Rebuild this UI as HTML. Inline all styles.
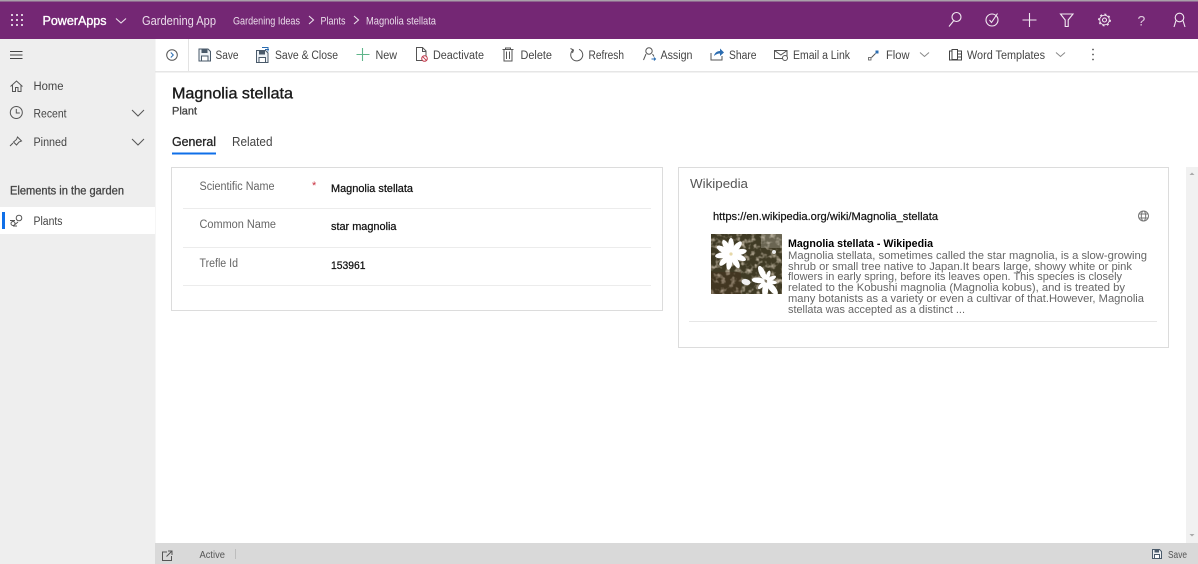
<!DOCTYPE html>
<html lang="en"><head><meta charset="utf-8"><title>Magnolia stellata</title>
<style>
html,body{margin:0;padding:0;background:#fff;width:1198px;height:564px;overflow:hidden}
svg{display:block}
#r{filter:blur(.3px)}
text{font-family:"Liberation Sans",sans-serif;white-space:pre}
.ic{fill:none;stroke:#555;stroke-width:1}
.w{fill:none;stroke:#fff;stroke-width:1.1}
.t{font-size:11.5px;fill:#444}
.n{font-size:11.5px;fill:#555}
.v{font-size:11px;fill:#111;stroke:#111;stroke-width:.25}
.d{font-size:11.5px;fill:#666}
.sb{stroke-width:.3}
</style></head><body>
<svg id="r" width="1198" height="564" viewBox="0 0 1198 564" xmlns="http://www.w3.org/2000/svg">
<defs>
<filter id="tx" x="0" y="0" width="100%" height="100%"><feTurbulence type="fractalNoise" baseFrequency=".2" numOctaves="2" seed="9"/><feColorMatrix values="0 0 0 0 .66  0 0 0 0 .58  0 0 0 0 .46  2.600 0 0 0 -1.250"/></filter>
<g id="sv"><path d="M.5 .5h9l2.500 2.500v9.500H.5z" fill="#eef2f6" stroke="#4a5a6a"/><rect x="3" y="1" width="6" height="3.500" fill="#4a5a6a"/><rect x="3" y="7.500" width="6.500" height="5" fill="#fff" stroke="#4a5a6a"/></g>
<g id="sv2"><path d="M.5 .5h7l2 2v7h-9z" fill="#eef0f2" stroke="#4a5a6a"/><rect x="2.500" y="1" width="4.500" height="2.500" fill="#4a5a6a"/><rect x="2.500" y="5.500" width="5" height="4" fill="#fff" stroke="#4a5a6a"/></g>
<ellipse id="p1" cx="0" cy="-9" rx="2.900" ry="7" fill="#fff"/>
<ellipse id="p2" cx="0" cy="-6" rx="2" ry="5" fill="#fff"/>
</defs>
<rect width="1198" height="564" fill="#fff"/>
<!-- header -->
<rect width="1198" height="39" fill="#742774"/>
<rect width="1198" height="1.500" fill="#a9a0a9"/>
<g fill="#fff"><circle cx="12" cy="15" r="1"/><circle cx="17" cy="15" r="1"/><circle cx="22" cy="15" r="1"/><circle cx="12" cy="20" r="1"/><circle cx="17" cy="20" r="1"/><circle cx="22" cy="20" r="1"/><circle cx="12" cy="25" r="1"/><circle cx="17" cy="25" r="1"/><circle cx="22" cy="25" r="1"/></g>
<text x="42.500" y="25" font-size="13" fill="#fff" stroke="#fff" stroke-width=".35" textLength="64" lengthAdjust="spacingAndGlyphs">PowerApps</text>
<path class="w" d="M116 18.500l5 4.500 5-4.500" opacity=".85"/>
<text x="142" y="25" font-size="13" fill="#eadcea" textLength="74" lengthAdjust="spacingAndGlyphs">Gardening App</text>
<text x="233" y="24.500" font-size="11" fill="#eadcea" textLength="67" lengthAdjust="spacingAndGlyphs">Gardening Ideas</text>
<path class="w" d="M309 16l4.500 4-4.500 4" opacity=".85"/>
<text x="320.500" y="24.500" font-size="11" fill="#eadcea" textLength="25" lengthAdjust="spacingAndGlyphs">Plants</text>
<path class="w" d="M354 16l4.500 4-4.500 4" opacity=".85"/>
<text x="366" y="24.500" font-size="11" fill="#eadcea" textLength="70" lengthAdjust="spacingAndGlyphs">Magnolia stellata</text>
<!-- header icons -->
<g opacity=".9">
<circle class="w" cx="956.500" cy="17" r="4.500"/><path class="w" d="M953.500 21l-4.500 5.500"/>
<circle class="w" cx="992" cy="20" r="6"/><path class="w" d="M989.500 20l2 2.500 6-9"/>
<path class="w" d="M1029.500 13v14M1022.500 20h14"/>
<path class="w" d="M1060.500 14h12.500l-4.800 6v6.500h-3v-6.500z"/>
<circle class="w" stroke-width=".8" cx="1104.500" cy="20" r="2"/><circle cx="1104.500" cy="20" r="4.800" fill="none" stroke="#fff" stroke-width=".9"/><circle cx="1104.500" cy="20" r="5.800" fill="none" stroke="#fff" stroke-width="1.200" stroke-dasharray="2 2.500"/>
<text x="1137.500" y="25.500" font-size="14" fill="#eadcea">?</text>
<circle class="w" cx="1179.500" cy="17.500" r="4.300"/><path class="w" d="M1174 27l2-6.500M1185 27l-2-6.500"/>
</g>
<!-- sidebar -->
<rect x="0" y="39" width="155.500" height="525" fill="#eeeeee"/>
<path d="M10 51.500h12.500M10 55h12.500M10 58.500h12.500" stroke="#444" stroke-width="1" fill="none"/>
<path class="ic" d="M10.500 86.500l6-5.500 6 5.500M12.500 85v6.500h3v-4h2.500v4h3V85"/>
<text x="33.500" y="90" class="t" textLength="30" lengthAdjust="spacingAndGlyphs">Home</text>
<circle class="ic" cx="16.300" cy="112.500" r="6"/><path class="ic" d="M16.300 109v4h3.500"/>
<text x="33.500" y="117.500" class="t" textLength="33" lengthAdjust="spacingAndGlyphs">Recent</text>
<path d="M132 110l6 6 6-6" fill="none" stroke="#555"/>
<path class="ic" d="M17.500 137l4 4-2.500 1-2.500 3-3-3 3-2.500zM13 143l-3 3"/>
<text x="33.500" y="146" class="t" textLength="33.500" lengthAdjust="spacingAndGlyphs">Pinned</text>
<path d="M132 139l6 6 6-6" fill="none" stroke="#555"/>
<text x="10" y="194.500" font-size="11.500" fill="#444" stroke="#444" class="sb" textLength="114" lengthAdjust="spacingAndGlyphs">Elements in the garden</text>
<rect x="0" y="207" width="155" height="27" fill="#fff"/>
<rect x="2" y="212" width="3" height="17" fill="#0f6fe8"/>
<circle class="ic" cx="19" cy="218" r="2.800"/><circle class="ic" cx="13" cy="223.500" r="2"/><path class="ic" d="M10 220.500h5M15 224.500l3-2.500M17 226h-4"/>
<text x="33.500" y="225" class="t" textLength="29" lengthAdjust="spacingAndGlyphs">Plants</text>
<!-- toolbar -->
<rect x="155" y="71" width="1043" height="1.500" fill="#e6e6e6"/>
<rect x="188" y="39" width="1" height="32" fill="#e3e3e3"/>
<circle cx="172" cy="55" r="5.300" fill="none" stroke="#555"/><path d="M170.800 52.500l2.500 2.500-2.500 2.500" fill="none" stroke="#2b6cb0"/>
<use href="#sv" x="198.500" y="48.500"/>
<text x="215.500" y="59" class="t" textLength="23" lengthAdjust="spacingAndGlyphs">Save</text>
<use href="#sv" x="256" y="50"/><path d="M262 47.500h6v4M265 49.500h4" fill="none" stroke="#2b6cb0" stroke-width="1"/>
<text x="275" y="59" class="t" textLength="63" lengthAdjust="spacingAndGlyphs">Save &amp; Close</text>
<path d="M362.500 48v13M356.500 54.500h13" stroke="#5fb58a" stroke-width="1.100" fill="none"/>
<text x="375.500" y="59" class="t" textLength="21.500" lengthAdjust="spacingAndGlyphs">New</text>
<path class="ic" d="M424 60.500h-7.500v-13h6l3.500 3.500v5M422.500 47.500v4h3.500"/><circle cx="424.500" cy="58.500" r="2.800" fill="#fff" stroke="#c0394b"/><path d="M422.800 56.800l3.400 3.400" stroke="#c0394b"/>
<text x="433" y="59" class="t" textLength="51" lengthAdjust="spacingAndGlyphs">Deactivate</text>
<path class="ic" d="M502.500 49.500h11M505.500 49.500v-1.500h5v1.500M504 49.500v11.500h8V49.500M506.500 51.500v7.500M509.500 51.500v7.500"/>
<text x="520.500" y="59" class="t" textLength="31.500" lengthAdjust="spacingAndGlyphs">Delete</text>
<path class="ic" d="M573.500 49.800a6 6 0 1 0 5.500-.500M570.500 48.500l3 1.500-1 3"/>
<text x="588.500" y="59" class="t" textLength="35.500" lengthAdjust="spacingAndGlyphs">Refresh</text>
<circle class="ic" cx="649" cy="51" r="3.200"/><path class="ic" d="M643.500 60l2.500-6M654 56.500l-1.500-2.500"/><path d="M651.500 59h4M654 57.500l1.500 1.500-1.500 1.500" stroke="#2b6cb0" fill="none"/>
<text x="660.500" y="59" class="t" textLength="32" lengthAdjust="spacingAndGlyphs">Assign</text>
<path class="ic" d="M711 53v7h11v-4"/><path d="M714 56c.5-3 3-5 6-5v-2.500l4 4-4 3.500v-2.500c-2.500 0-4.500 1-6 2.500z" fill="#2b6cb0"/>
<text x="729" y="59" class="t" textLength="27.500" lengthAdjust="spacingAndGlyphs">Share</text>
<path class="ic" d="M774.500 50.500h12.500v8h-12.500zM774.500 50.500l6.300 4.500 6.300-4.500"/><circle cx="785" cy="58" r="2.500" fill="#fff" stroke="#555"/>
<text x="793" y="59" class="t" textLength="57" lengthAdjust="spacingAndGlyphs">Email a Link</text>
<rect x="868.500" y="57.500" width="2.500" height="2.500" fill="none" stroke="#555" stroke-width=".8"/><path class="ic" d="M871.500 57.500l4-4"/><rect x="875.500" y="50.500" width="3" height="3" fill="#2b6cb0"/>
<text x="886" y="59" class="t" textLength="23.500" lengthAdjust="spacingAndGlyphs">Flow</text>
<path d="M920 52.500l4.500 4 4.500-4" fill="none" stroke="#888"/>
<rect x="949.500" y="51" width="12" height="9" fill="none" stroke="#444"/><rect x="952" y="49.500" width="5.500" height="10" fill="#fff" stroke="#444"/><path d="M957.500 54h4M957.500 57h4" stroke="#444" fill="none"/>
<text x="967" y="59" class="t" textLength="78" lengthAdjust="spacingAndGlyphs">Word Templates</text>
<path d="M1056 52.500l4.500 4 4.500-4" fill="none" stroke="#888"/>
<g fill="#555"><circle cx="1093" cy="49.500" r=".9"/><circle cx="1093" cy="54.500" r=".9"/><circle cx="1093" cy="59.500" r=".9"/></g>
<!-- title -->
<text x="172" y="98.500" font-size="16" fill="#1a1a1a" stroke="#1a1a1a" stroke-width=".35" textLength="121" lengthAdjust="spacingAndGlyphs">Magnolia stellata</text>
<text x="172" y="114.500" font-size="11" fill="#444" stroke="#444" class="sb" textLength="25" lengthAdjust="spacingAndGlyphs">Plant</text>
<text x="172" y="146" font-size="13" fill="#222" stroke="#222" stroke-width=".3" textLength="44" lengthAdjust="spacingAndGlyphs">General</text>
<rect x="172" y="152.500" width="44" height="2" fill="#0f6fe8"/>
<text x="232" y="146" font-size="13" fill="#444" textLength="40.500" lengthAdjust="spacingAndGlyphs">Related</text>
<!-- form card -->
<rect x="171.500" y="167.500" width="491" height="143" fill="#fff" stroke="#dcdcdc"/>
<path d="M183 208.500h468M183 247.500h468M183 285.500h468" stroke="#ececec" fill="none"/>
<text x="199.500" y="190" class="d" textLength="75" lengthAdjust="spacingAndGlyphs">Scientific Name</text>
<text x="312" y="189" font-size="11" fill="#c8303f">*</text>
<text x="331" y="192" class="v" textLength="82" lengthAdjust="spacingAndGlyphs">Magnolia stellata</text>
<text x="199.500" y="228" class="d" textLength="76.500" lengthAdjust="spacingAndGlyphs">Common Name</text>
<text x="331" y="230" class="v" textLength="65.500" lengthAdjust="spacingAndGlyphs">star magnolia</text>
<text x="199.500" y="267" class="d" textLength="38.500" lengthAdjust="spacingAndGlyphs">Trefle Id</text>
<text x="331" y="269" class="v" textLength="34.500" lengthAdjust="spacingAndGlyphs">153961</text>
<!-- wiki card -->
<rect x="678.500" y="167.500" width="490" height="180" fill="#fff" stroke="#dcdcdc"/>
<text x="690" y="188" font-size="13" fill="#555" textLength="58" lengthAdjust="spacingAndGlyphs">Wikipedia</text>
<text x="713" y="220" font-size="11" fill="#111" stroke="#111" stroke-width=".2" textLength="225" lengthAdjust="spacingAndGlyphs">https://en.wikipedia.org/wiki/Magnolia_stellata</text>
<circle cx="1143.500" cy="216" r="5" fill="none" stroke="#777"/><ellipse cx="1143.500" cy="216" rx="2.200" ry="5" fill="none" stroke="#777"/><path d="M1138.500 214h10M1138.500 218h10" fill="none" stroke="#777"/>
<!-- thumbnail -->
<svg x="711" y="234" width="71" height="60" viewBox="0 0 71 60">
<rect width="71" height="60" fill="#3f3a24"/>
<rect width="71" height="60" filter="url(#tx)"/>
<rect x="50" y="0" width="21" height="14" fill="#b9b6aa" opacity=".35"/>
<rect x="0" y="38" width="30" height="22" fill="#4a2f1c" opacity=".3"/>
<g>
<use href="#p1" transform="translate(20 20) rotate(0)"/>
<use href="#p1" transform="translate(20 20) rotate(40)"/>
<use href="#p1" transform="translate(20 20) rotate(78)"/>
<use href="#p1" transform="translate(20 20) rotate(112)"/>
<use href="#p1" transform="translate(20 20) rotate(150)"/>
<use href="#p1" transform="translate(20 20) rotate(190)"/>
<use href="#p1" transform="translate(20 20) rotate(225)"/>
<use href="#p1" transform="translate(20 20) rotate(262)"/>
<use href="#p1" transform="translate(20 20) rotate(298)"/>
<use href="#p1" transform="translate(20 20) rotate(330)"/>
<use href="#p2" transform="translate(55 47) rotate(-25) scale(1.500)"/>
<use href="#p2" transform="translate(55 47) rotate(20)"/>
<use href="#p2" transform="translate(55 47) rotate(65)"/>
<use href="#p2" transform="translate(55 47) rotate(100)"/>
<use href="#p2" transform="translate(55 47) rotate(140) scale(1.600)"/>
<use href="#p2" transform="translate(55 47) rotate(185) scale(1.500)"/>
<use href="#p2" transform="translate(55 47) rotate(225)"/>
<use href="#p2" transform="translate(55 47) rotate(275) scale(1.400 1.300)"/>
<ellipse cx="35" cy="48" rx="4.500" ry="3" fill="#efefef" transform="rotate(12 35 48)"/>
<circle cx="63" cy="18" r="2" fill="#e8e8e8"/>
</g>
<circle cx="20" cy="20" r="3" fill="#fff"/>
<circle cx="20" cy="20" r="1.600" fill="#e6d8a8"/>
</svg>
<text x="788" y="247" font-size="11" font-weight="700" fill="#000" textLength="145" lengthAdjust="spacingAndGlyphs">Magnolia stellata - Wikipedia</text>
<g font-size="11" fill="#666">
<text x="788" y="259" textLength="359" lengthAdjust="spacingAndGlyphs">Magnolia stellata, sometimes called the star magnolia, is a slow-growing</text>
<text x="788" y="270" textLength="344" lengthAdjust="spacingAndGlyphs">shrub or small tree native to Japan.It bears large, showy white or pink</text>
<text x="788" y="280" textLength="334" lengthAdjust="spacingAndGlyphs">flowers in early spring, before its leaves open. This species is closely</text>
<text x="788" y="291" textLength="337" lengthAdjust="spacingAndGlyphs">related to the Kobushi magnolia (Magnolia kobus), and is treated by</text>
<text x="788" y="302" textLength="356" lengthAdjust="spacingAndGlyphs">many botanists as a variety or even a cultivar of that.However, Magnolia</text>
<text x="788" y="313" textLength="177" lengthAdjust="spacingAndGlyphs">stellata was accepted as a distinct ...</text>
</g>
<path d="M689 321.500h468" stroke="#e6e6e6" fill="none"/>
<!-- scrollbar -->
<rect x="1186" y="167" width="12" height="376" fill="#f1f1f1"/>
<path d="M1189.500 175l2.500-2.500 2.500 2.500z" fill="#aaa"/>
<path d="M1189.500 534l2.500 2.500 2.500-2.500z" fill="#aaa"/>
<!-- status bar -->
<rect x="155" y="543" width="1043" height="21" fill="#d9d9d9"/>
<path class="ic" d="M167 552h-4.500v8.500h9V556M166.500 556.500l5-5M168 551h4v4"/>
<text x="199.500" y="558" font-size="10" fill="#555" textLength="25.500" lengthAdjust="spacingAndGlyphs">Active</text>
<rect x="235" y="549" width="1" height="10" fill="#bdbdbd"/>
<use href="#sv2" x="1152" y="549"/>
<text x="1168" y="558" font-size="10" fill="#555" textLength="19" lengthAdjust="spacingAndGlyphs">Save</text>
</svg>
</body></html>
